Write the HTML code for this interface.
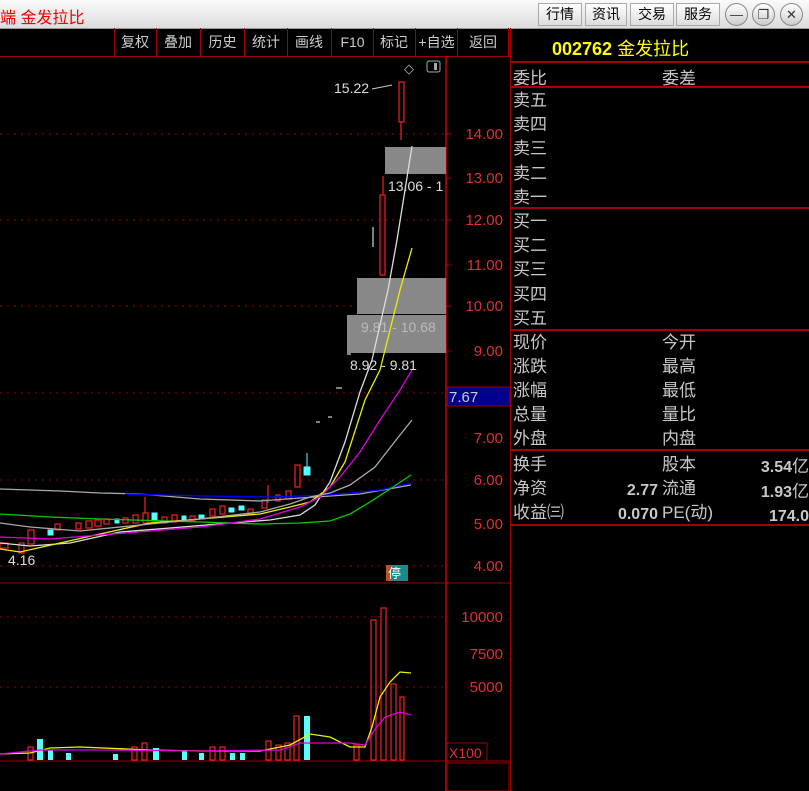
<!DOCTYPE html><html><head><meta charset="utf-8"><style>
body{margin:0;width:809px;height:791px;background:#000;overflow:hidden;position:relative;font-family:"Liberation Sans","Noto Sans CJK SC",sans-serif}
.t{position:absolute;white-space:nowrap}
#tb{position:absolute;left:0;top:0;width:809px;height:28px;background:linear-gradient(#fbfbfb,#dcdcdc);border-bottom:1px solid #999}
.bt{position:absolute;top:3px;height:21px;border:1px solid #aaa;background:linear-gradient(#fff,#ddd);font-size:14px;line-height:21px;text-align:center;color:#000}
.ci{position:absolute;top:3px;width:21px;height:21px;border-radius:50%;border:1px solid #888;background:linear-gradient(#fff,#ccc);font-size:13px;line-height:21px;text-align:center;color:#333}
.tl{position:absolute;top:28px;height:28px;border-left:1px solid #a00000;font-size:14px;line-height:28px;color:#ccc;text-align:center}
.g{color:#c8c8c8;font-size:17px;left:513px}
.g2{color:#c8c8c8;font-size:17px;left:662px}
.v{color:#c8c8c8;font-size:16px;font-weight:bold;text-align:right}
.hl{position:absolute;left:510px;width:299px;height:2px;background:#a00000}
</style></head><body>
<div id="tb"></div>
<div class="t" style="left:0;top:4px;color:#e00;font-size:16px">端 金发拉比</div>
<div class="bt" style="left:538px;width:42px">行情</div>
<div class="bt" style="left:585px;width:40px">资讯</div>
<div class="bt" style="left:630px;width:42px">交易</div>
<div class="bt" style="left:676px;width:42px">服务</div>
<div class="ci" style="left:725px">—</div>
<div class="ci" style="left:752px">❐</div>
<div class="ci" style="left:780px">✕</div>
<div class="tl" style="left:114px;width:40px">复权</div>
<div class="tl" style="left:156px;width:42px">叠加</div>
<div class="tl" style="left:200px;width:43px">历史</div>
<div class="tl" style="left:244px;width:42px">统计</div>
<div class="tl" style="left:287px;width:42px">画线</div>
<div class="tl" style="left:331px;width:41px">F10</div>
<div class="tl" style="left:373px;width:40px">标记</div>
<div class="tl" style="left:415px;width:41px">+自选</div>
<div class="tl" style="left:457px;width:50px;border-right:1px solid #a00000">返回</div>
<div style="position:absolute;left:0;top:56px;width:510px;height:1px;background:#a00000"></div>
<div style="position:absolute;left:510px;top:28px;width:1px;height:763px;background:#a00000"></div>
<div class="t" style="left:552px;top:35px;font-size:18px;color:#ff0"><b>002762</b> 金发拉比</div>
<div class="hl" style="top:61px"></div><div class="hl" style="top:86px"></div><div class="hl" style="top:207px"></div><div class="hl" style="top:329px"></div><div class="hl" style="top:449px"></div><div class="hl" style="top:524px"></div>
<div class="t g" style="top:64px">委比</div><div class="t g2" style="top:64px">委差</div>
<div class="t g" style="top:89px;line-height:24.2px">卖五<br>卖四<br>卖三<br>卖二<br>卖一</div>
<div class="t g" style="top:210px;line-height:24.2px">买一<br>买二<br>买三<br>买四<br>买五</div>
<div class="t g" style="top:331px;line-height:24px">现价<br>涨跌<br>涨幅<br>总量<br>外盘</div>
<div class="t g2" style="top:331px;line-height:24px">今开<br>最高<br>最低<br>量比<br>内盘</div>
<div class="t g" style="top:453px;line-height:24px">换手<br>净资<br>收益㈢</div>
<div class="t g2" style="top:453px;line-height:24px">股本<br>流通<br>PE(动)</div>
<div class="t v" style="right:0;top:455px;line-height:24px">3.54<span style="font-weight:normal;font-size:17px">亿</span><br>1.93<span style="font-weight:normal;font-size:17px">亿</span><br>174.0</div>
<div class="t v" style="left:580px;width:78px;top:479px;line-height:24px">2.77<br>0.070</div>
<svg style="position:absolute;left:0;top:57px" width="510" height="734" font-family="Liberation Sans" >
<g stroke="#a00000" stroke-dasharray="2,5" stroke-width="1"><line x1="0" y1="77" x2="446" y2="77"/><line x1="0" y1="163" x2="446" y2="163"/><line x1="0" y1="249" x2="446" y2="249"/><line x1="0" y1="336" x2="446" y2="336"/><line x1="0" y1="423" x2="446" y2="423"/><line x1="0" y1="509" x2="446" y2="509"/><line x1="0" y1="560" x2="446" y2="560"/><line x1="0" y1="630" x2="446" y2="630"/></g>
<line x1="446" y1="0" x2="446" y2="734" stroke="#a00000" stroke-width="2"/>
<line x1="0" y1="526" x2="510" y2="526" stroke="#a00000"/>
<line x1="0" y1="704" x2="510" y2="704" stroke="#a00000"/>
<g fill="#e03030" font-size="15" text-anchor="end"><text x="503" y="82">14.00</text><text x="503" y="126">13.00</text><text x="503" y="168">12.00</text><text x="503" y="213">11.00</text><text x="503" y="254">10.00</text><text x="503" y="299">9.00</text><text x="503" y="386">7.00</text><text x="503" y="428">6.00</text><text x="503" y="472">5.00</text><text x="503" y="514">4.00</text>
<text x="503" y="565">10000</text><text x="503" y="602">7500</text><text x="503" y="635">5000</text></g>
<g stroke="#a00000"><line x1="446" y1="77" x2="452" y2="77"/><line x1="446" y1="121" x2="452" y2="121"/><line x1="446" y1="163" x2="452" y2="163"/><line x1="446" y1="208" x2="452" y2="208"/><line x1="446" y1="249" x2="452" y2="249"/><line x1="446" y1="294" x2="452" y2="294"/></g>
<rect x="447" y="330" width="63" height="19" fill="#000090" stroke="#a00000"/><text x="449" y="345" fill="#ccc" font-size="15">7.67</text>
<rect x="447" y="686" width="40" height="18" fill="none" stroke="#a00000"/><text x="449" y="701" fill="#e03030" font-size="14">X100</text>
<rect x="447" y="706" width="62" height="28" fill="none" stroke="#a00000"/>
<g fill="#888"><rect x="385" y="90" width="61" height="27"/><rect x="357" y="221" width="89" height="36"/><rect x="347" y="258" width="99" height="38"/></g>
<g fill="#ddd" font-size="14"><text x="388" y="134">13.06 - 1</text><text x="361" y="275" fill="#bbb">9.81 - 10.68</text><text x="350" y="313">8.92 - 9.81</text><text x="334" y="36">15.22</text><text x="8" y="508">4.16</text></g>
<path d="M372 32 L392 28" stroke="#ccc"/>
<text x="404" y="16" fill="#bbb" font-size="13">◇</text><rect x="427" y="4" width="13" height="11" rx="2" fill="none" stroke="#aaa"/><rect x="434" y="6" width="3" height="7" fill="#aaa"/>
<g fill="none" stroke="#e02020" stroke-width="1.3">
<rect x="399" y="25" width="5" height="40"/><line x1="401" y1="65" x2="401" y2="83"/>
<rect x="380" y="138" width="5" height="80"/><line x1="383" y1="119" x2="383" y2="138"/>
<rect x="295" y="408" width="5" height="22"/><rect x="286" y="434" width="5" height="8"/><rect x="276" y="438" width="4" height="6"/><line x1="268" y1="428" x2="268" y2="446"/>
<rect x="28" y="473" width="6" height="14"/><rect x="19" y="486" width="5" height="10"/><rect x="0" y="486" width="8" height="5"/><rect x="55" y="467" width="5" height="6"/><rect x="76" y="466" width="5" height="6"/><rect x="86" y="464" width="6" height="7"/><rect x="95" y="463" width="6" height="6"/><rect x="104" y="462" width="5" height="5"/><rect x="123" y="461" width="5" height="5"/><rect x="133" y="458" width="5" height="8"/><rect x="143" y="456" width="5" height="10"/><line x1="145" y1="440" x2="145" y2="456"/><rect x="162" y="460" width="5" height="6"/><rect x="172" y="458" width="5" height="7"/><rect x="190" y="459" width="5" height="5"/><rect x="210" y="452" width="5" height="7"/><rect x="220" y="449" width="5" height="8"/><rect x="248" y="452" width="5" height="5"/><rect x="262" y="443" width="5" height="8"/></g>
<g fill="#5ff" stroke="#5ff"><rect x="304" y="410" width="6" height="8"/><line x1="307" y1="396" x2="307" y2="410"/><rect x="152" y="456" width="5" height="8"/><rect x="182" y="459" width="4" height="5"/><rect x="199" y="458" width="5" height="4"/><rect x="229" y="451" width="5" height="4"/><rect x="239" y="449" width="5" height="4"/><rect x="48" y="473" width="5" height="5"/><rect x="115" y="462" width="4" height="4"/></g>
<g stroke="#fff"><line x1="373" y1="170" x2="373" y2="190"/><line x1="316" y1="365" x2="320" y2="365"/><line x1="328" y1="360" x2="332" y2="360"/><line x1="336" y1="331" x2="342" y2="331"/><line x1="347" y1="297" x2="351" y2="297"/></g>
<g fill="none" stroke-width="1.3">
<path d="M0 432 L60 434 L100 436 L140 437 L200 442 L260 444 L300 441 L360 437 L411 428" stroke="#aaa"/>
<path d="M125 437 L200 439 L270 440 L330 438 L380 433 L411 426" stroke="#00f"/>
<path d="M0 457 L50 460 L100 462 L200 465 L260 467 L300 466 L330 464 L350 457 L370 445 L390 432 L411 418" stroke="#0c0"/>
<path d="M0 486 L30 489 L70 486 L120 475 L170 471 L230 466 L270 463 L300 458 L315 448 L330 425 L345 385 L360 335 L372 303 L388 233 L397 183 L405 133 L412 89" stroke="#ddd"/>
<path d="M0 492 L20 495 L60 486 L100 477 L150 466 L200 462 L260 457 L290 450 L310 445 L330 430 L345 405 L365 343 L380 313 L390 273 L400 233 L412 191" stroke="#ee0"/>
<path d="M0 480 L50 482 L100 478 L150 474 L200 470 L260 462 L300 450 L320 440 L340 420 L360 395 L380 363 L400 333 L412 313" stroke="#d0d"/>
<path d="M0 466 L30 470 L80 474 L140 468 L200 462 L260 455 L290 447 L310 440 L330 436 L350 428 L375 410 L400 378 L412 363" stroke="#aaa"/>
</g>
<rect x="386" y="508" width="22" height="16" fill="#1a8a8a"/><rect x="386" y="508" width="6" height="16" fill="#c05020"/><text x="388" y="521" fill="#fff" font-size="13">停</text>
<g fill="none" stroke="#e02020" stroke-width="1.3">
<rect x="371" y="563" width="5" height="140"/><rect x="381" y="551" width="5" height="152"/><rect x="391" y="627" width="5" height="76"/><rect x="400" y="640" width="4" height="63"/><rect x="294" y="659" width="5" height="44"/><rect x="266" y="684" width="5" height="19"/><rect x="276" y="688" width="5" height="15"/><rect x="285" y="686" width="5" height="17"/><rect x="354" y="688" width="5" height="15"/><rect x="28" y="690" width="5" height="13"/><rect x="142" y="686" width="5" height="17"/><rect x="132" y="690" width="5" height="13"/><rect x="210" y="690" width="5" height="13"/><rect x="220" y="690" width="5" height="13"/></g>
<g fill="#5ff"><rect x="37" y="682" width="6" height="21"/><rect x="304" y="659" width="6" height="44"/><rect x="153" y="691" width="6" height="12"/><rect x="48" y="693" width="5" height="10"/><rect x="66" y="696" width="5" height="7"/><rect x="113" y="697" width="5" height="6"/><rect x="182" y="693" width="5" height="10"/><rect x="199" y="696" width="5" height="7"/><rect x="230" y="696" width="5" height="7"/><rect x="240" y="696" width="5" height="7"/></g>
<path d="M0 697 L30 696 L50 691 L80 690 L150 693 L200 694 L260 694 L290 688 L310 677 L330 680 L350 690 L365 690 L372 670 L380 640 L390 625 L400 615 L411 616" fill="none" stroke="#ee0" stroke-width="1.3"/>
<path d="M0 697 L40 693 L100 693 L200 694 L280 693 L300 686 L350 686 L365 688 L375 672 L385 660 L400 655 L411 658" fill="none" stroke="#d0d" stroke-width="1.3"/>
</svg>
</body></html>
